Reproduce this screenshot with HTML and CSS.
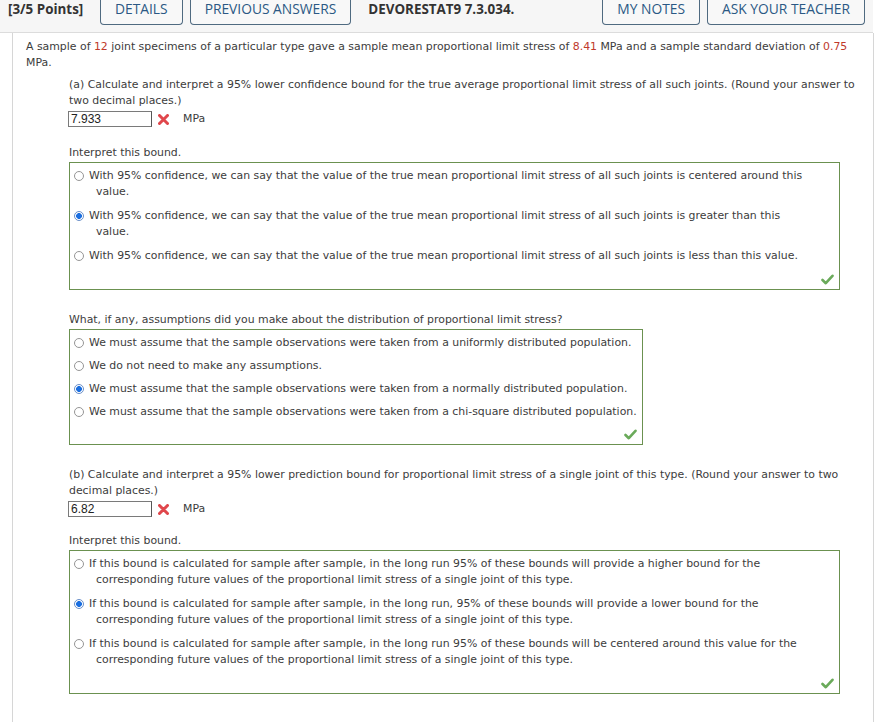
FILE: index.html
```html
<!DOCTYPE html>
<html>
<head>
<meta charset="utf-8">
<link rel="stylesheet" href="styles.css">
</head>
<body>
<div class="header">
  <span class="points">[3/5 Points]</span>
  <span class="btn btn-details">DETAILS</span>
  <span class="btn btn-prev">PREVIOUS ANSWERS</span>
  <span class="qid">DEVORESTAT9 7.3.034.</span>
  <span class="spacer"></span>
  <span class="btn">MY NOTES</span>
  <span class="btn btn-ask">ASK YOUR TEACHER</span>
</div>
<div class="content">
  <p class="intro">A sample of <span class="red">12</span> joint specimens of a particular type gave a sample mean proportional limit stress of <span class="red">8.41</span> MPa and a sample standard deviation of <span class="red">0.75</span> MPa.</p>
  <div class="part">
    <p class="q">(a) Calculate and interpret a 95% lower confidence bound for the true average proportional limit stress of all such joints. (Round your answer to two decimal places.)</p>
    <div class="answer">
      <span class="input">7.933</span>
      <svg class="xmark" width="11" height="11" viewBox="0 0 11 11"><path d="M1.5 1.5 L9.5 9.5 M9.5 1.5 L1.5 9.5" stroke="#e0474c" stroke-width="3" stroke-linecap="round"/></svg>
      <span class="unit">MPa</span>
    </div>
    <p class="label label-first">Interpret this bound.</p>
    <div class="box box-wide">
      <div class="opt"><span class="radio"></span><span class="txt">With 95% confidence, we can say that the value of the true mean proportional limit stress of all such joints is centered around this value.</span></div>
      <div class="opt"><span class="radio on"></span><span class="txt">With 95% confidence, we can say that the value of the true mean proportional limit stress of all such joints is greater than this value.</span></div>
      <div class="opt"><span class="radio"></span><span class="txt">With 95% confidence, we can say that the value of the true mean proportional limit stress of all such joints is less than this value.</span></div>
      <div class="check"><svg width="13" height="11" viewBox="0 0 13 11"><path d="M1.5 6 L4.8 9.2 L11.5 1.8" fill="none" stroke="#6aaa5a" stroke-width="2.6" stroke-linecap="round" stroke-linejoin="round"/></svg></div>
    </div>
    <p class="label label-gap">What, if any, assumptions did you make about the distribution of proportional limit stress?</p>
    <div class="box box-narrow">
      <div class="opt"><span class="radio"></span><span class="txt">We must assume that the sample observations were taken from a uniformly distributed population.</span></div>
      <div class="opt"><span class="radio"></span><span class="txt">We do not need to make any assumptions.</span></div>
      <div class="opt"><span class="radio on"></span><span class="txt">We must assume that the sample observations were taken from a normally distributed population.</span></div>
      <div class="opt"><span class="radio"></span><span class="txt">We must assume that the sample observations were taken from a chi-square distributed population.</span></div>
      <div class="check"><svg width="13" height="11" viewBox="0 0 13 11"><path d="M1.5 6 L4.8 9.2 L11.5 1.8" fill="none" stroke="#6aaa5a" stroke-width="2.6" stroke-linecap="round" stroke-linejoin="round"/></svg></div>
    </div>
    <p class="q q-b">(b) Calculate and interpret a 95% lower prediction bound for proportional limit stress of a single joint of this type. (Round your answer to two decimal places.)</p>
    <div class="answer">
      <span class="input">6.82</span>
      <svg class="xmark" width="11" height="11" viewBox="0 0 11 11"><path d="M1.5 1.5 L9.5 9.5 M9.5 1.5 L1.5 9.5" stroke="#e0474c" stroke-width="3" stroke-linecap="round"/></svg>
      <span class="unit">MPa</span>
    </div>
    <p class="label label-second">Interpret this bound.</p>
    <div class="box box-wide">
      <div class="opt"><span class="radio"></span><span class="txt">If this bound is calculated for sample after sample, in the long run 95% of these bounds will provide a higher bound for the corresponding future values of the proportional limit stress of a single joint of this type.</span></div>
      <div class="opt"><span class="radio on"></span><span class="txt">If this bound is calculated for sample after sample, in the long run, 95% of these bounds will provide a lower bound for the corresponding future values of the proportional limit stress of a single joint of this type.</span></div>
      <div class="opt"><span class="radio"></span><span class="txt">If this bound is calculated for sample after sample, in the long run 95% of these bounds will be centered around this value for the corresponding future values of the proportional limit stress of a single joint of this type.</span></div>
      <div class="check"><svg width="13" height="11" viewBox="0 0 13 11"><path d="M1.5 6 L4.8 9.2 L11.5 1.8" fill="none" stroke="#6aaa5a" stroke-width="2.6" stroke-linecap="round" stroke-linejoin="round"/></svg></div>
    </div>
  </div>
</div>
</body>
</html>
```
FILE: styles.css
```css
html, body {
  margin: 0;
  padding: 0;
  background: #ffffff;
}
body {
  font-family: "DejaVu Sans", Verdana, sans-serif;
  font-size: 10.9px;
  color: #3c3c3c;
}
.header {
  width: 873px;
  height: 33px;
  box-sizing: border-box;
  background: #f6f6f6;
  border-bottom: 1px solid #dcdcdc;
  display: flex;
  align-items: flex-start;
  font-family: "Open Sans", sans-serif;
  font-size: 13.8px;
  line-height: 18px;
  padding-right: 8px;
}
.points {
  font-weight: bold;
  color: #333;
  margin-left: 8px;
  font-size: 13.4px;
  width: 92px;
}
.btn {
  display: block;
  height: 25px;
  box-sizing: border-box;
  border: 1px solid #4f6a80;
  border-top: none;
  border-radius: 0 0 4px 4px;
  padding: 0 14px;
  color: #2b5884;
  background: #f8f8f8;
  line-height: 18px;
  margin-right: 7px;
}
.btn-prev {
  margin-right: 17px;
}
.btn-ask {
  margin-right: 0;
}
.qid {
  font-weight: bold;
  font-size: 13.4px;
  color: #333;
}
.spacer {
  flex: 1;
}
.content {
  margin-left: 12px;
  width: 862px;
  box-sizing: border-box;
  border-left: 1px solid #d6d6d6;
  border-right: 1px solid #d6d6d6;
  padding: 6px 0 30px 13px;
  line-height: 16px;
}
p {
  margin: 0;
}
.red {
  color: #c0392b;
}
.part {
  padding-left: 43px;
  margin-top: 6px;
}
.q {
  width: 795px;
}
.q-b {
  margin-top: 22px;
}
.answer {
  display: flex;
  align-items: center;
  margin-top: 2px;
  height: 16px;
}
.input {
  display: block;
  width: 84px;
  height: 16px;
  box-sizing: border-box;
  border: 1px solid #7a7a7a;
  border-right-color: #555;
  padding-left: 2px;
  font-family: "Liberation Sans", Arial, sans-serif;
  font-size: 12px;
  line-height: 14px;
  color: #222;
  margin-left: -1px;
}
.xmark {
  margin-left: 6px;
}
.unit {
  margin-left: 14px;
}
.label-first {
  margin-top: 18px;
  margin-bottom: 1px;
}
.label-gap {
  margin-top: 22px;
  margin-bottom: 1px;
}
.label-second {
  margin-top: 16px;
  margin-bottom: 1px;
}
.box {
  border: 1px solid #6b9150;
  padding: 5px 5px 3px 4px;
  box-sizing: border-box;
}
.box-wide {
  width: 771px;
  padding-right: 27px;
}
.box-wide .check {
  margin-right: -22px;
}
.box-narrow {
  width: fit-content;
}
.opt {
  display: flex;
  align-items: flex-start;
  margin-bottom: 8px;
}
.box-narrow .opt {
  margin-bottom: 7px;
}
.radio {
  flex: none;
  width: 10px;
  height: 10px;
  box-sizing: border-box;
  border: 1px solid #959595;
  border-radius: 50%;
  margin-top: 3px;
  margin-right: 5px;
  background: #fff;
}
.radio.on {
  border-color: #6a8fc8;
  background: radial-gradient(circle, #1a6ee0 0, #1a6ee0 2.6px, #ffffff 3.2px);
}
.txt {
  padding-left: 7px;
  text-indent: -7px;
}
.check {
  display: flex;
  justify-content: flex-end;
  height: 14px;
  align-items: center;
}
```
